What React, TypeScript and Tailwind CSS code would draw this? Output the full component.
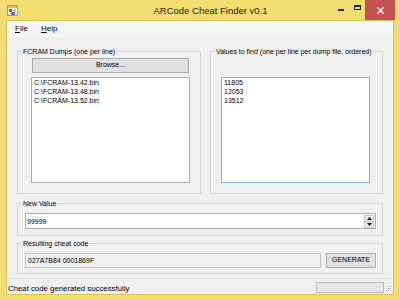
import React from "react";

const sans = "font-['Liberation_Sans',Arial,sans-serif]";

function AppIcon() {
  return (
    <svg width="11" height="11" viewBox="0 0 11 11">
      <rect x="0.5" y="0.5" width="10" height="10" fill="#fafafa" stroke="#9a9a9a" />
      <rect x="1" y="1" width="9" height="2" fill="#e9b84a" />
      <rect x="2" y="4" width="3" height="3" fill="#d93a2b" />
      <rect x="6" y="4" width="3" height="3" fill="#f2c230" />
      <rect x="4" y="7" width="4" height="3" fill="#3f78d0" />
    </svg>
  );
}

function TitleBar() {
  return (
    <div className="h-[20px] flex items-center">
      <div className="pl-[7px] pt-[1px] flex items-center">
        <AppIcon />
      </div>
      <div className="flex-1 pl-[70px] text-center text-[9.5px] leading-[12px] text-[#1a1a1a] font-['Liberation_Sans',Arial,sans-serif] pt-[1px]">
        ARCode Cheat Finder v0.1
      </div>
      <div className="flex items-start h-full">
        <div className="w-[16px] h-full flex justify-center">
          <div className="mt-[9px] w-[6px] h-[2px] bg-[#222]" />
        </div>
        <div className="w-[16px] h-full flex justify-center">
          <div className="mt-[5px] w-[7px] h-[5px] border border-t-2 border-[#222]" />
        </div>
        <div className="w-[30px] h-full bg-[#c75050] flex items-center justify-center mr-[5px]">
          <svg width="7" height="7" viewBox="0 0 7 7">
            <path d="M0.5 0.5L6.5 6.5M6.5 0.5L0.5 6.5" stroke="#fff" strokeWidth="1.4" />
          </svg>
        </div>
      </div>
    </div>
  );
}

function Group({ label, children, className = "" }: { label: string; children: React.ReactNode; className?: string }) {
  return (
    <fieldset className={`border border-[#d5d5d5] min-w-0 ${className}`}>
      <legend className="ml-[4px] px-[1px] text-[7px] leading-[9px] text-black">{label}</legend>
      {children}
    </fieldset>
  );
}

function ListBox({ items, focused }: { items: string[]; focused?: boolean }) {
  return (
    <div
      className={`h-[106px] bg-white border pl-[2px] text-[7px] leading-[9px] text-black ${
        focused ? "border-[#7eb4ea]" : "border-[#abadb3]"
      }`}
    >
      {items.map((t) => (
        <div key={t}>{t}</div>
      ))}
    </div>
  );
}

function Spinner() {
  return (
    <div className="flex flex-col w-[10px] h-[13px] mr-[1px]">
      <div className="flex-1 flex items-center justify-center bg-[#e9e9e9] border border-[#c8c8c8]">
        <svg width="5" height="3" viewBox="0 0 5 3">
          <path d="M2.5 0L5 3H0z" fill="#111" />
        </svg>
      </div>
      <div className="flex-1 flex items-center justify-center bg-[#e9e9e9] border border-t-0 border-[#c8c8c8]">
        <svg width="5" height="3" viewBox="0 0 5 3">
          <path d="M0 0H5L2.5 3z" fill="#111" />
        </svg>
      </div>
    </div>
  );
}

export default function App() {
  return (
    <div className={`w-[400px] h-[300px] flex flex-col bg-[#f1de6e] overflow-hidden ${sans}`}>
      <TitleBar />
      <div className="flex-1 mx-[6px] mb-[5px] flex flex-col border border-[#d9c45c] bg-[#f0f0f0]">
        <div className="h-[16px] flex items-center pl-[8px] gap-[13px] bg-[#f5f6f7] text-[8px] leading-[10px] text-black">
          <span>
            <span className="underline">F</span>ile
          </span>
          <span>
            <span className="underline">H</span>elp
          </span>
        </div>

        <div className="px-[10px] flex flex-col">
          <div className="mt-[10px] flex gap-[9px]">
            <Group label="FCRAM Dumps (one per line)" className="w-[184px]">
              <div className="pl-[13px] pr-[10px] pb-[10px]">
                <div className="mt-[2px] mx-[1px] h-[15px] flex items-center justify-center bg-[#e1e1e1] border border-[#adadad] text-[7px] text-black">
                  Browse...
                </div>
                <div className="mt-[4px]">
                  <ListBox items={["C:\\FCRAM-13.42.bin", "C:\\FCRAM-13.48.bin", "C:\\FCRAM-13.52.bin"]} />
                </div>
              </div>
            </Group>
            <Group label="Values to find (one per line per dump file, ordered)" className="flex-1">
              <div className="pl-[10px] pr-[12px] pb-[10px]">
                <div className="mt-[21px]">
                  <ListBox items={["11805", "12053", "13512"]} focused />
                </div>
              </div>
            </Group>
          </div>

          <Group label="New Value" className="mt-[5px]">
            <div className="pl-[7px] pr-[6px] pb-[6px]">
              <div className="mt-[5px] h-[16px] flex items-center bg-white border border-[#abadb3]">
                <span className="flex-1 pl-[1px] text-[7px] leading-[9px] text-black">99999</span>
                <Spinner />
              </div>
            </div>
          </Group>

          <Group label="Resulting cheat code" className="mt-[3px]">
            <div className="pl-[7px] pr-[6px] pb-[5px] flex gap-[5px] mt-[5px]">
              <div className="flex-1 h-[15px] flex items-center bg-[#f0f0f0] border border-[#c4c4c4] pl-[2px] text-[7px] leading-[9px] text-black">
                027A7B84 0001869F
              </div>
              <div className="w-[50px] h-[15px] flex items-center justify-center bg-[#e1e1e1] border border-[#adadad] text-[7px] text-black">
                GENERATE
              </div>
            </div>
          </Group>
        </div>

        <div className="flex-1" />

        <div className="h-[16px] flex items-end pb-[1px] border-t border-[#e2e2e2]">
          <span className="flex-1 pl-[1px] text-[7.8px] leading-[9px] text-black">
            Cheat code generated successfully
          </span>
          <div className="w-[68px] h-[11px] bg-[#e6e6e6] border border-[#bcbcbc]" />
          <svg width="9" height="9" viewBox="0 0 9 9" className="ml-[0px]">
            <rect x="6" y="2" width="1" height="1" fill="#a0a0a0" />
            <rect x="4" y="4" width="1" height="1" fill="#a0a0a0" />
            <rect x="6" y="4" width="1" height="1" fill="#a0a0a0" />
            <rect x="2" y="6" width="1" height="1" fill="#a0a0a0" />
            <rect x="4" y="6" width="1" height="1" fill="#a0a0a0" />
            <rect x="6" y="6" width="1" height="1" fill="#a0a0a0" />
          </svg>
        </div>
      </div>
    </div>
  );
}
